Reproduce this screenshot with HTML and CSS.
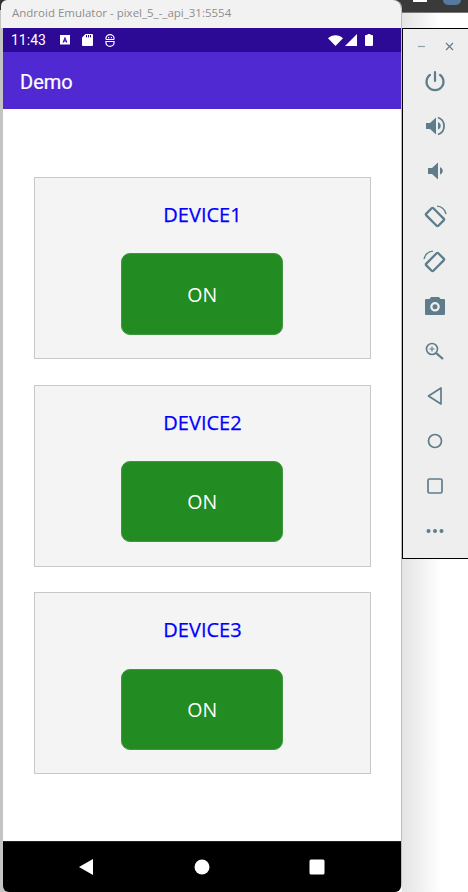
FILE: index.html
```html
<!DOCTYPE html>
<html lang="en">
<head>
<meta charset="utf-8">
<title>Android Emulator</title>
<link rel="stylesheet" href="styles.css">
</head>
<body>
<div class="desk">
  <main class="phone">
    <div class="titlebar">Android Emulator - pixel_5_-_api_31:5554</div>
    <div class="statusbar">
      <span class="clock">11:43</span>
      <svg class="st st-a" viewBox="0 0 10 10"><path fill="#fff" fill-rule="evenodd" d="M0 0h10v9.400H0zM5 1.600 2.600 7.600h1.400l.4-1.100h1.200l.4 1.100h1.400L5 1.600zM5 3.900l.4 1.500H4.600z"/></svg>
      <svg class="st st-sd" viewBox="0 0 11 12"><path fill="#fff" d="M3.500 0H10a1 1 0 0 1 1 1v10a1 1 0 0 1-1 1H1a1 1 0 0 1-1-1V3.500z"/><path stroke="#2c0a96" d="M4.500 1v2.400M6.500 1v2.400M8.500 1v2.400"/></svg>
      <svg class="st st-bot" viewBox="0 0 10 13"><path fill="none" stroke="#fff" stroke-width="1.200" d="M1 5.500V4a4 3.400 0 0 1 8 0v1.500M1 5.500h8M1 7.500h8V9a4 3.400 0 0 1-8 0z"/><path fill="#fff" d="M3 3h1.200v1.200H3zM5.800 3H7v1.200H5.800z"/></svg>
      <span class="spacer"></span>
      <svg class="st st-wifi" viewBox="0 0 15 11"><path fill="#fff" d="M0 3.200C4-.9 11-.9 15 3.200L7.500 11z"/></svg>
      <svg class="st st-sig" viewBox="0 0 12 12"><path fill="#fff" d="M12 0v12H0z"/></svg>
      <svg class="st st-bat" viewBox="0 0 8 12"><path fill="#fff" d="M2.500 0h3v1H7a1 1 0 0 1 1 1v9a1 1 0 0 1-1 1H1a1 1 0 0 1-1-1V2a1 1 0 0 1 1-1h1.500z"/></svg>
    </div>
    <header class="appbar">Demo</header>
    <section class="content">
      <article class="card">
        <h2 class="name">DEVICE1</h2>
        <button class="toggle" type="button">ON</button>
      </article>
      <article class="card">
        <h2 class="name">DEVICE2</h2>
        <button class="toggle" type="button">ON</button>
      </article>
      <article class="card">
        <h2 class="name">DEVICE3</h2>
        <button class="toggle" type="button">ON</button>
      </article>
    </section>
    <nav class="navbar">
      <svg class="nav-ic" viewBox="0 0 16 16"><path fill="#fff" d="M15 0v16L1 8z"/></svg>
      <svg class="nav-ic" viewBox="0 0 16 16"><circle cx="8" cy="8" r="7.500" fill="#fff"/></svg>
      <svg class="nav-ic" viewBox="0 0 16 16"><rect x=".5" y=".5" width="15" height="15" rx="1.500" fill="#fff"/></svg>
    </nav>
  </main>
  <aside class="side">
    <div class="topstrip"><span class="tab"></span><span class="avatar"></span></div>
    <div class="gap"></div>
    <div class="tools">
      <div class="winctl">
        <svg class="ctl" viewBox="0 0 9 9"><path stroke="#8fa3ad" stroke-width="1.200" d="M1 4.500h7"/></svg>
        <svg class="ctl" viewBox="0 0 9 9"><path stroke="#5f7c8a" stroke-width="1.200" d="M1 1l7 7M8 1 1 8"/></svg>
      </div>
      <svg class="tool" viewBox="0 0 24 24"><path fill="none" stroke="#5f7c8a" stroke-width="2.200" stroke-linecap="round" d="M12 3v9M7 5.800a8.500 8.500 0 1 0 10 0"/></svg>
      <svg class="tool" viewBox="0 0 24 24"><path fill="#5f7c8a" d="M3 9v6h4l6 5.500v-17L7 9z"/><path fill="#5f7c8a" d="M15 8.200v7.600a4 4 0 0 0 0-7.600z"/><path fill="none" stroke="#5f7c8a" stroke-width="1.800" d="M15 3.500a9 9 0 0 1 0 17"/></svg>
      <svg class="tool" viewBox="0 0 24 24"><path fill="#5f7c8a" d="M5 9v6h4l6 5.500v-17L9 9z"/><path fill="#5f7c8a" d="M17 8.200v7.600a4 4 0 0 0 0-7.600z"/></svg>
      <svg class="tool" viewBox="0 0 24 24"><g fill="none" stroke="#5f7c8a"><rect x="7" y="4.500" width="10" height="17" rx="1.200" stroke-width="2.300" transform="rotate(-45 12 13)"/><path stroke-width="1.300" d="M14 2.200a9.500 9.500 0 0 1 9 8"/></g></svg>
      <svg class="tool" viewBox="0 0 24 24"><g fill="none" stroke="#5f7c8a"><rect x="7" y="4.500" width="10" height="17" rx="1.200" stroke-width="2.300" transform="rotate(45 12 13)"/><path stroke-width="1.300" d="M1 10.200a9.500 9.500 0 0 1 9-8"/></g></svg>
      <svg class="tool" viewBox="0 0 24 24"><path fill="#5f7c8a" fill-rule="evenodd" d="M8 3h8l1.500 2H21a1 1 0 0 1 1 1v14a1 1 0 0 1-1 1H3a1 1 0 0 1-1-1V6a1 1 0 0 1 1-1h3.500zM12 8a4.800 4.800 0 1 0 0 9.600A4.800 4.800 0 0 0 12 8zM12 10.300a2.500 2.500 0 1 1 0 5 2.500 2.500 0 0 1 0-5z"/></svg>
      <svg class="tool" viewBox="0 0 24 24"><g fill="none" stroke="#5f7c8a"><circle cx="9" cy="10" r="5.500" stroke-width="1.600"/><path stroke-width="2.200" d="M13.200 14.200l6.800 5.800"/><path stroke-width="1.100" d="M6.500 10h5M9 7.500v5"/></g></svg>
      <svg class="tool" viewBox="0 0 24 24"><path fill="none" stroke="#5f7c8a" stroke-width="1.700" stroke-linejoin="round" d="M18 4v16L5.500 12z"/></svg>
      <svg class="tool" viewBox="0 0 24 24"><circle cx="12" cy="12" r="6.500" fill="none" stroke="#5f7c8a" stroke-width="1.700"/></svg>
      <svg class="tool" viewBox="0 0 24 24"><rect x="5" y="5" width="14" height="14" rx="1.500" fill="none" stroke="#5f7c8a" stroke-width="1.700"/></svg>
      <svg class="tool" viewBox="0 0 24 24"><g fill="#5f7c8a"><circle cx="5.500" cy="12" r="2"/><circle cx="12" cy="12" r="2"/><circle cx="18.500" cy="12" r="2"/></g></svg>
    </div>
    <div class="shade"></div>
  </aside>
</div>
</body>
</html>
```

FILE: styles.css
```css
* { box-sizing: border-box; }
html, body { margin: 0; height: 100%; }
body { background: #fff; font-family: "Open Sans", "Noto Sans", sans-serif; }
.desk { display: flex; width: 468px; height: 892px; overflow: hidden; background: linear-gradient(#3a3a3a 0 12px, #fff 12px); }

.phone {
  width: 402px;
  height: 892px;
  flex: none;
  display: flex;
  flex-direction: column;
  padding-left: 3px;
  background: linear-gradient(#333 0 10px, #c4c4c4 10px);
  border-right: 1px solid #bcbcbc;
  border-radius: 0 8px 8px 0;
}
.titlebar {
  height: 28px;
  margin-left: -2px;
  padding: 5px 0 0 11px;
  background: #f2f2f2;
  color: #8e8e8e;
  font-size: 11.500px;
  line-height: 16px;
  border-radius: 6px 8px 0 0;
}
.statusbar {
  height: 24px;
  display: flex;
  align-items: center;
  background: #2c0a96;
  color: #fff;
  padding-left: 8px;
  padding-right: 28px;
}
.clock { font-family: Roboto, sans-serif; font-size: 14px; line-height: 24px; width: 49px; }
.st { display: block; flex: none; }
.st-a { width: 10px; height: 10px; margin-right: 12px; }
.st-sd { width: 11px; height: 12px; margin-right: 12px; }
.st-bot { width: 10px; height: 13px; }
.spacer { flex: 1; }
.st-wifi { width: 15px; height: 11px; margin-right: 2px; }
.st-sig { width: 12px; height: 12px; margin-right: 8px; }
.st-bat { width: 8px; height: 12px; }

.appbar {
  height: 57px;
  padding: 17px 0 0 17px;
  background: #5029d2;
  color: #fff;
  font-family: Roboto, sans-serif;
  font-size: 20px;
  font-weight: 400;
  -webkit-text-stroke: 0.2px #fff;
  line-height: 26px;
}
.content {
  flex: 1;
  background: #fff;
  padding: 68px 30px 0 31px;
  display: flex;
  flex-direction: column;
  gap: 25.600px;
}
.card {
  height: 182px;
  background: #f4f4f4;
  border: 1px solid #c8c8c8;
  display: flex;
  flex-direction: column;
  align-items: center;
}
.name {
  margin: 23px 0 0;
  color: #0000ff;
  font-size: 20px;
  font-weight: 400;
  -webkit-text-stroke: 0.25px #0000ff;
  line-height: 27px;
}
.toggle {
  width: 162px;
  height: 81.500px;
  margin: 25.400px 0.500px 0 0;
  border: 1px solid #3f983f;
  border-radius: 9px;
  background: #228b22;
  color: #fff;
  font-family: inherit;
  font-size: 19.500px;
  font-weight: 400;
  padding: 0;
}
.navbar {
  height: 51px;
  flex: none;
  display: flex;
  align-items: center;
  background: #000;
  border-top: 1px solid #222;
  border-radius: 0 0 6px 6px;
  padding: 0 76px 0 75px;
  justify-content: space-between;
}
.nav-ic { width: 16px; height: 16px; display: block; }

.side { flex: 1; min-width: 0; display: flex; flex-direction: column; }
.topstrip {
  height: 13px;
  background: #3a3a3a;
  border-bottom: 1px solid #777;
  display: flex;
  padding-left: 11px;
  gap: 16px;
}
.tab { width: 14px; height: 2px; background: #fff; }
.avatar { width: 18px; height: 5px; background: #5579a0; border-radius: 0 0 9px 9px; }
.gap { height: 15px; background: linear-gradient(90deg, #e4e4e4, #fff 60%); }
.tools {
  height: 531px;
  border: 1px solid #000;
  border-right: 0;
  background: #eeeeee;
  display: flex;
  flex-direction: column;
  align-items: center;
  padding-right: 1px;
}
.winctl { display: flex; gap: 19px; margin-top: 13px; height: 9px; margin-bottom: 18px; }
.ctl { width: 9px; height: 9px; display: block; }
.tool { width: 24px; height: 24px; display: block; margin-bottom: 21px; flex: none; }
.shade { flex: 1; background: linear-gradient(90deg, #e4e4e4, #fff 60%); }
```
